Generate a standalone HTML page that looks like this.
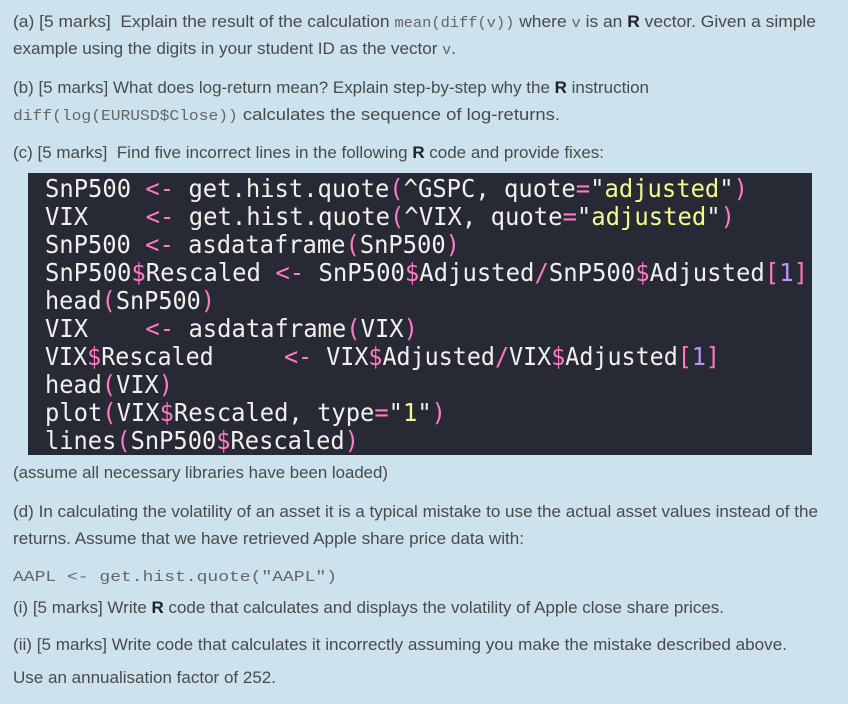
<!DOCTYPE html>
<html><head><meta charset="utf-8"><style>html,body{margin:0;padding:0;background:#cce2ed;}svg{display:block}text{white-space:pre}</style></head><body>
<svg width="848" height="704" xmlns="http://www.w3.org/2000/svg">
<rect width="848" height="704" fill="#cce2ed"/>
<g font-family="Liberation Sans, sans-serif" font-size="17" fill="#4a4a4a">
<text x="13" y="27" textLength="803" lengthAdjust="spacingAndGlyphs">(a) [5 marks]  Explain the result of the calculation <tspan font-family="Liberation Mono, monospace" font-size="15" fill="#666">mean(diff(v))</tspan> where <tspan font-family="Liberation Mono, monospace" font-size="15" fill="#666">v</tspan> is an <tspan font-weight="bold" fill="#222">R</tspan> vector. Given a simple</text>
<text x="13" y="54" textLength="443" lengthAdjust="spacingAndGlyphs">example using the digits in your student ID as the vector <tspan font-family="Liberation Mono, monospace" font-size="15" fill="#666">v</tspan>.</text>
<text x="13" y="93" textLength="636" lengthAdjust="spacingAndGlyphs">(b) [5 marks] What does log-return mean? Explain step-by-step why the <tspan font-weight="bold" fill="#222">R</tspan> instruction</text>
<text x="13" y="120" textLength="547" lengthAdjust="spacingAndGlyphs"><tspan font-family="Liberation Mono, monospace" font-size="15" fill="#666">diff(log(EURUSD$Close))</tspan> calculates the sequence of log-returns.</text>
<text x="13" y="158" textLength="591" lengthAdjust="spacingAndGlyphs">(c) [5 marks]  Find five incorrect lines in the following <tspan font-weight="bold" fill="#222">R</tspan> code and provide fixes:</text>
<text x="13" y="478" textLength="375" lengthAdjust="spacingAndGlyphs">(assume all necessary libraries have been loaded)</text>
<text x="13" y="517" textLength="805" lengthAdjust="spacingAndGlyphs">(d) In calculating the volatility of an asset it is a typical mistake to use the actual asset values instead of the</text>
<text x="13" y="544" textLength="511" lengthAdjust="spacingAndGlyphs">returns. Assume that we have retrieved Apple share price data with:</text>
<text x="13" y="581" textLength="324" lengthAdjust="spacingAndGlyphs" font-family="Liberation Mono, monospace" font-size="15" fill="#666">AAPL &lt;- get.hist.quote("AAPL")</text>
<text x="13" y="613" textLength="711" lengthAdjust="spacingAndGlyphs">(i) [5 marks] Write <tspan font-weight="bold" fill="#222">R</tspan> code that calculates and displays the volatility of Apple close share prices.</text>
<text x="13" y="650" textLength="774" lengthAdjust="spacingAndGlyphs">(ii) [5 marks] Write code that calculates it incorrectly assuming you make the mistake described above.</text>
<text x="13" y="683" textLength="263" lengthAdjust="spacingAndGlyphs">Use an annualisation factor of 252.</text>
</g>
<rect x="28" y="173" width="784" height="282" fill="#272935"/>
<g font-family="DejaVu Sans Mono, monospace" font-size="25" fill="#f0f0ec">
<text x="45" y="197" textLength="703" lengthAdjust="spacingAndGlyphs">SnP500 <tspan fill="#ff79c6">&lt;-</tspan> get.hist.quote<tspan fill="#ff79c6">(</tspan>^GSPC, quote<tspan fill="#ff79c6">=</tspan>"<tspan fill="#f1fa8c">adjusted</tspan>"<tspan fill="#ff79c6">)</tspan></text>
<text x="45" y="225" textLength="690" lengthAdjust="spacingAndGlyphs">VIX    <tspan fill="#ff79c6">&lt;-</tspan> get.hist.quote<tspan fill="#ff79c6">(</tspan>^VIX, quote<tspan fill="#ff79c6">=</tspan>"<tspan fill="#f1fa8c">adjusted</tspan>"<tspan fill="#ff79c6">)</tspan></text>
<text x="45" y="253" textLength="415" lengthAdjust="spacingAndGlyphs">SnP500 <tspan fill="#ff79c6">&lt;-</tspan> asdataframe<tspan fill="#ff79c6">(</tspan>SnP500<tspan fill="#ff79c6">)</tspan></text>
<text x="45" y="281" textLength="763" lengthAdjust="spacingAndGlyphs">SnP500<tspan fill="#ff79c6">$</tspan>Rescaled <tspan fill="#ff79c6">&lt;-</tspan> SnP500<tspan fill="#ff79c6">$</tspan>Adjusted<tspan fill="#ff79c6">/</tspan>SnP500<tspan fill="#ff79c6">$</tspan>Adjusted<tspan fill="#ff79c6">[</tspan><tspan fill="#bd93f9">1</tspan><tspan fill="#ff79c6">]</tspan></text>
<text x="45" y="309" textLength="170" lengthAdjust="spacingAndGlyphs">head<tspan fill="#ff79c6">(</tspan>SnP500<tspan fill="#ff79c6">)</tspan></text>
<text x="45" y="337" textLength="373" lengthAdjust="spacingAndGlyphs">VIX    <tspan fill="#ff79c6">&lt;-</tspan> asdataframe<tspan fill="#ff79c6">(</tspan>VIX<tspan fill="#ff79c6">)</tspan></text>
<text x="45" y="365" textLength="675" lengthAdjust="spacingAndGlyphs">VIX<tspan fill="#ff79c6">$</tspan>Rescaled     <tspan fill="#ff79c6">&lt;-</tspan> VIX<tspan fill="#ff79c6">$</tspan>Adjusted<tspan fill="#ff79c6">/</tspan>VIX<tspan fill="#ff79c6">$</tspan>Adjusted<tspan fill="#ff79c6">[</tspan><tspan fill="#bd93f9">1</tspan><tspan fill="#ff79c6">]</tspan></text>
<text x="45" y="393" textLength="128" lengthAdjust="spacingAndGlyphs">head<tspan fill="#ff79c6">(</tspan>VIX<tspan fill="#ff79c6">)</tspan></text>
<text x="45" y="421" textLength="401" lengthAdjust="spacingAndGlyphs">plot<tspan fill="#ff79c6">(</tspan>VIX<tspan fill="#ff79c6">$</tspan>Rescaled, type<tspan fill="#ff79c6">=</tspan>"<tspan fill="#f1fa8c">1</tspan>"<tspan fill="#ff79c6">)</tspan></text>
<text x="45" y="449" textLength="314" lengthAdjust="spacingAndGlyphs">lines<tspan fill="#ff79c6">(</tspan>SnP500<tspan fill="#ff79c6">$</tspan>Rescaled<tspan fill="#ff79c6">)</tspan></text>
</g>
</svg>
</body></html>
